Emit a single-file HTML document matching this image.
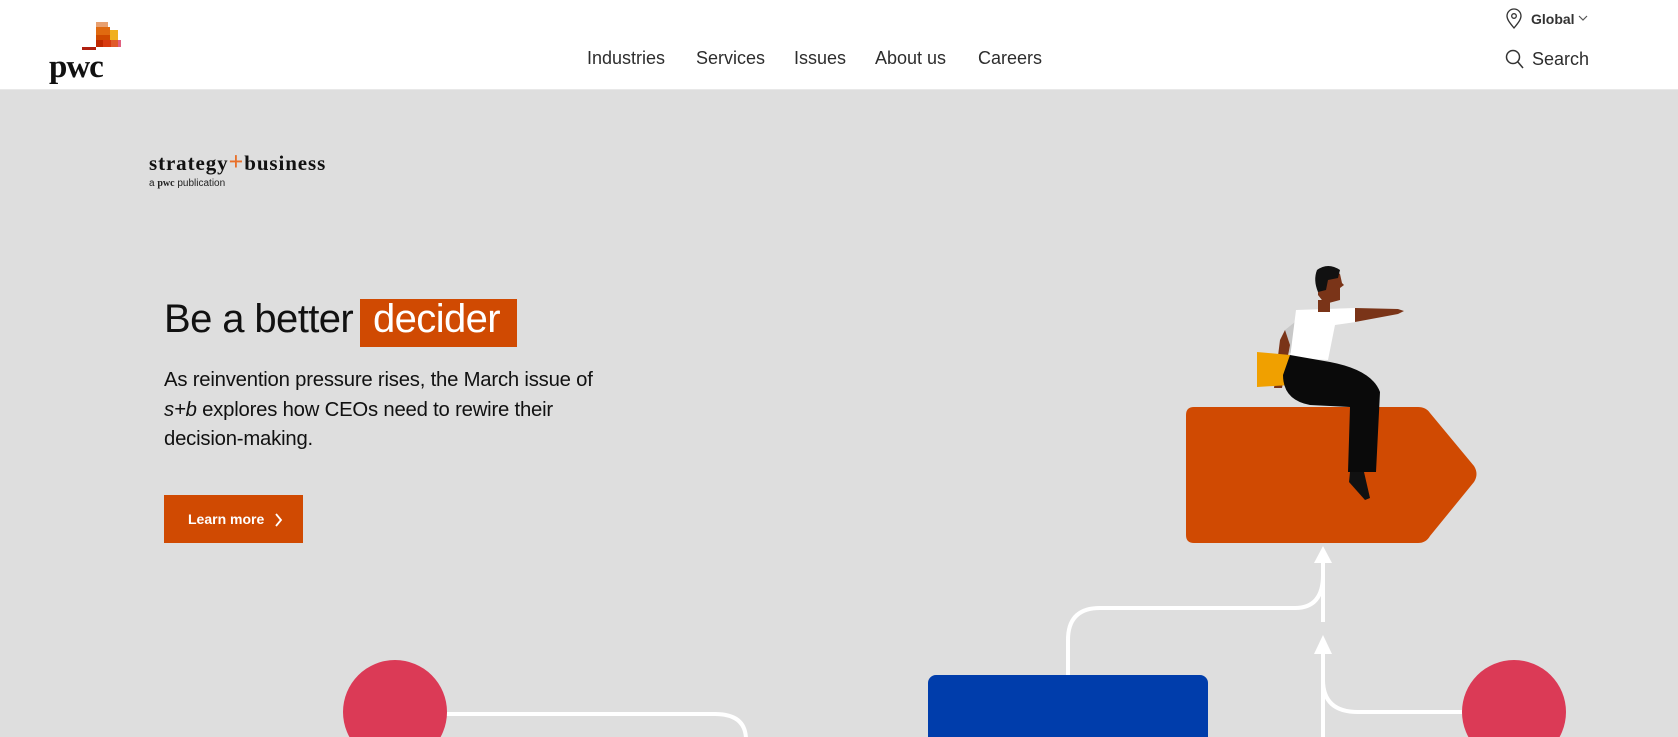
<!DOCTYPE html>
<html><head><meta charset="utf-8"><style>
*{margin:0;padding:0;box-sizing:border-box}
body{width:1678px;height:737px;overflow:hidden;background:#dedede;font-family:"Liberation Sans",Arial,sans-serif;position:relative}
.hdr{position:absolute;left:0;top:0;width:1678px;height:90px;background:#fff;border-bottom:1px solid #e8e8e8}
.a{position:absolute;white-space:nowrap}
.nav{top:48px;font-size:18px;color:#2d2d2d}
</style></head><body>
<div class="hdr">
  <div class="a" style="left:96px;top:22px;width:12px;height:5px;background:#e8a070"></div>
  <div class="a" style="left:96px;top:27px;width:14px;height:8px;background:#e06a10"></div>
  <div class="a" style="left:110px;top:30px;width:8px;height:10px;background:#f0b020"></div>
  <div class="a" style="left:96px;top:35px;width:14px;height:6px;background:#d04a00"></div>
  <div class="a" style="left:96px;top:40px;width:7px;height:7px;background:#c02800"></div>
  <div class="a" style="left:103px;top:40px;width:8px;height:7px;background:#d83a10"></div>
  <div class="a" style="left:111px;top:40px;width:7px;height:7px;background:#e05a2a"></div>
  <div class="a" style="left:118px;top:40px;width:3px;height:7px;background:#e06080"></div>
  <div class="a" style="left:82px;top:47px;width:14px;height:3px;background:#b02010"></div>
  <div class="a" style="left:49px;top:49px;font-family:'Liberation Serif',serif;font-weight:bold;font-size:33px;color:#111;letter-spacing:-1px">pwc</div>
  <div class="a nav" style="left:587px">Industries</div>
  <div class="a nav" style="left:696px">Services</div>
  <div class="a nav" style="left:794px">Issues</div>
  <div class="a nav" style="left:875px">About us</div>
  <div class="a nav" style="left:978px">Careers</div>
  <svg class="a" style="left:1505px;top:8px" width="18" height="22" viewBox="0 0 18 22"><path d="M9 20 C4 14 2 11 2 8 A7 7 0 0 1 16 8 C16 11 14 14 9 20Z" fill="none" stroke="#333" stroke-width="1.3"/><circle cx="9" cy="8" r="2.3" fill="none" stroke="#333" stroke-width="1.3"/></svg>
  <div class="a" style="left:1531px;top:11px;font-size:14px;font-weight:bold;color:#333">Global</div>
  <svg class="a" style="left:1578px;top:14px" width="10" height="8"><path d="M1 2 L5 6 L9 2" fill="none" stroke="#555" stroke-width="1.2"/></svg>
  <svg class="a" style="left:1505px;top:49px" width="20" height="21"><circle cx="8" cy="8" r="6.5" fill="none" stroke="#333" stroke-width="1.5"/><path d="M12.5 12.5 L18 19" stroke="#333" stroke-width="1.5"/></svg>
  <div class="a" style="left:1532px;top:49px;font-size:18px;color:#2d2d2d">Search</div>
</div>

<div class="a" style="left:149px;top:151px;font-family:'Liberation Serif',serif;font-weight:bold;font-size:21px;color:#111;letter-spacing:0.9px">strategy<span style="color:#e8702a;font-size:26px;line-height:10px">+</span>business</div>
<div class="a" style="left:149px;top:178px;font-size:10px;color:#222">a <b style="font-family:'Liberation Serif',serif">pwc</b> publication</div>

<div class="a" style="left:164px;top:297px;font-size:40px;color:#111;letter-spacing:-0.6px">Be a better</div>
<div class="a" style="left:360px;top:299px;width:157px;height:48px;background:#d04a02"></div>
<div class="a" style="left:373px;top:297px;font-size:40px;color:#fff;letter-spacing:-0.6px">decider</div>
<div class="a" style="left:164px;top:366px;font-size:20.3px;line-height:29.5px;color:#111;width:450px;white-space:normal;letter-spacing:-0.2px">As reinvention pressure rises, the March issue of <i>s+b</i> explores how CEOs need to rewire their decision-making.</div>
<div class="a" style="left:164px;top:495px;width:139px;height:48px;background:#d04a02"></div>
<div class="a" style="left:188px;top:511px;font-size:14px;font-weight:bold;color:#fff">Learn more</div>
<svg class="a" style="left:274px;top:513px" width="10" height="14"><path d="M2 1 L7 7 L2 13" fill="none" stroke="#fff" stroke-width="1.8"/></svg>

<svg class="a" style="left:0;top:0" width="1678" height="737">
  <g fill="none" stroke="#fff" stroke-width="4">
    <path d="M420 714 H715 Q746 714 746 740"/>
    <path d="M1068 675 V640 Q1068 608 1100 608 H1295 Q1323 608 1323 575 V560"/>
    <path d="M1323 572 V622"/>
    <path d="M1323 650 V737"/>
    <path d="M1462 712 H1358 Q1323 712 1323 680 V655"/>
  </g>
  <path d="M1323 546 L1332 563 L1314 563Z" fill="#fff"/>
  <path d="M1323 635 L1332 654 L1314 654Z" fill="#fff"/>
  <circle cx="395" cy="712" r="52" fill="#db3a56"/>
  <circle cx="1514" cy="712" r="52" fill="#db3a56"/>
  <rect x="928" y="675" width="280" height="80" rx="8" fill="#003dab"/>
  <path d="M1194 407 H1418 Q1426 407 1430 413 L1474 466 Q1479 474 1474 482 L1430 536 Q1426 543 1418 543 H1194 Q1186 543 1186 535 V415 Q1186 407 1194 407Z" fill="#d04a02"/>
  <path d="M1285 330 L1300 318 L1296 355 L1282 350Z" fill="#c8c8c8"/>
  <path d="M1296 310 L1355 308 L1356 322 L1335 325 L1328 360 L1290 358 Z" fill="#fff"/>
  <path d="M1355 308 L1398 309 L1404 311 L1398 314 L1355 322Z" fill="#7a3418"/>
  <rect x="1318" y="300" width="12" height="12" fill="#7a3418"/>
  <path d="M1318 272 Q1330 266 1340 274 L1342 283 L1344 285 L1340 288 L1340 300 L1325 304 L1318 295Z" fill="#7a3418"/>
  <path d="M1317 270 Q1328 262 1340 270 L1338 278 L1328 280 L1326 290 L1318 292 Q1313 280 1317 270Z" fill="#111"/>
  <path d="M1280 340 L1285 330 L1290 345 L1282 388 L1274 388Z" fill="#7a3418"/>
  <path d="M1257 352 L1290 355 L1290 385 L1257 387Z" fill="#f0a000"/>
  <path d="M1290 355 L1330 362 Q1372 370 1380 392 L1376 472 L1348 472 L1350 407 L1310 405 Q1283 400 1283 375Z" fill="#0a0a0a"/>
  <path d="M1350 472 L1364 472 L1370 498 L1365 500 L1349 482Z" fill="#111"/>
</svg>
</body></html>
